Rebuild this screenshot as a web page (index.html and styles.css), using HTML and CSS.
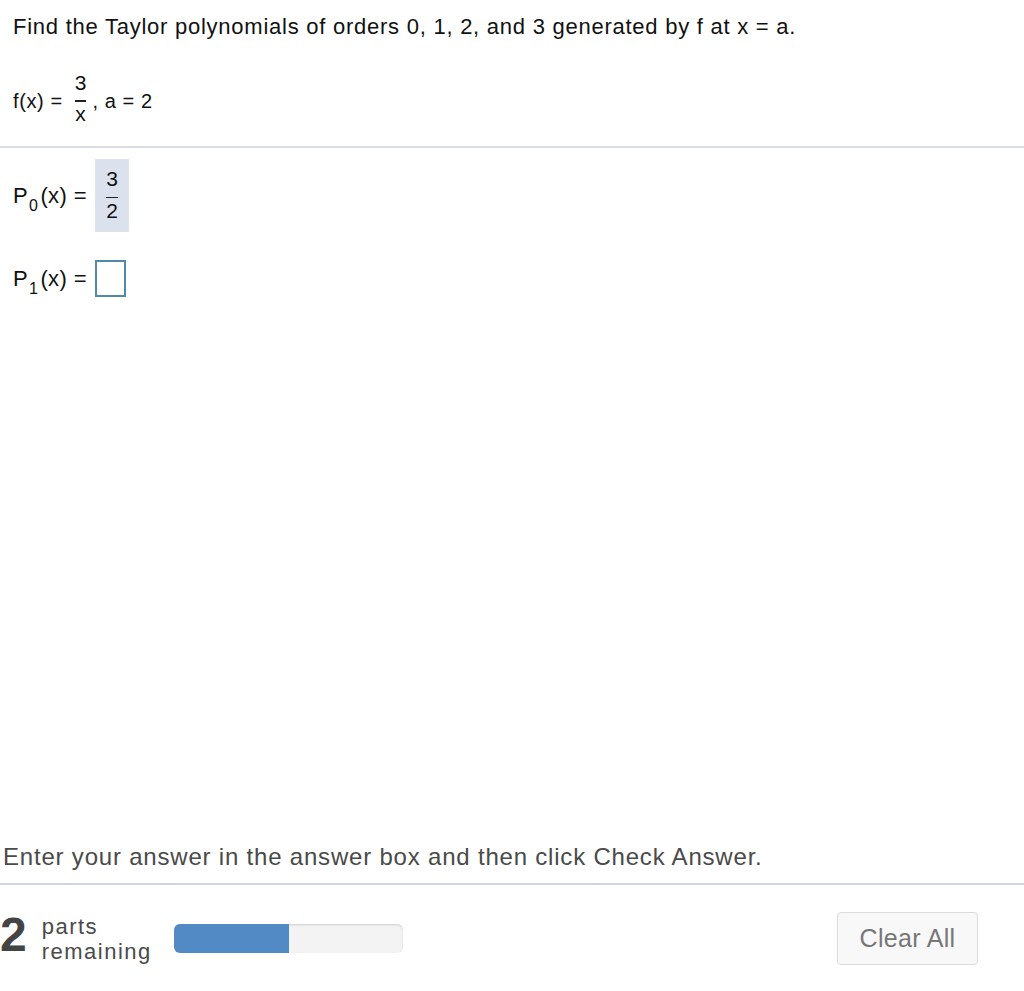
FILE: index.html
```html
<!DOCTYPE html>
<html lang="en">
<head>
<meta charset="utf-8">
<title>Taylor polynomials</title>
<link rel="stylesheet" href="styles.css">
</head>
<body>
<div class="page">
  <div class="question">
    <p class="title">Find the Taylor polynomials of orders 0, 1, 2, and 3 generated by f at x = a.</p>
    <div class="given">
      <span class="txt">f(x) =</span>
      <span class="frac">
        <span class="num">3</span>
        <span class="bar"></span>
        <span class="den">x</span>
      </span>
      <span class="txt">, a = 2</span>
    </div>
  </div>
  <div class="sep"></div>
  <div class="answers">
    <div class="row">
      <span class="txt">P<sub class="sub">0</sub>(x) =</span>
      <span class="filled">
        <span class="frac big">
          <span class="num">3</span>
          <span class="bar"></span>
          <span class="den">2</span>
        </span>
      </span>
    </div>
    <div class="row row2">
      <span class="txt">P<sub class="sub">1</sub>(x) =</span>
      <span class="inputbox"></span>
    </div>
  </div>
  <p class="instr">Enter your answer in the answer box and then click Check Answer.</p>
  <div class="sep sep2"></div>
  <div class="footer">
    <div class="remain">
      <span class="count">2</span>
      <span class="parts"><span class="pline">parts</span><span class="pline">remaining</span></span>
    </div>
    <div class="progress"><div class="fill" style="width: 50%"></div></div>
    <button class="clear">Clear All</button>
  </div>
</div>
</body>
</html>
```

FILE: styles.css
```css
* { box-sizing: border-box; }
html, body { margin: 0; padding: 0; background: #fff; }
body {
  font-family: "Liberation Sans", Arial, sans-serif;
  color: #111;
}
.page {
  height: 991px;
  display: flex;
  flex-direction: column;
}
.question { height: 146px; padding: 0 13px; flex: none; }
.title {
  margin: 0;
  padding-top: 14px;
  font-size: 22px;
  line-height: 26px;
  letter-spacing: 0.75px;
}
.given {
  margin-top: 33px;
  display: flex;
  align-items: center;
  font-size: 20px;
  line-height: 22px;
  letter-spacing: 0.6px;
}
.given .frac { margin-left: 10px; margin-right: 4px; font-size: 21px; }
.txt { white-space: pre; }

.frac {
  display: inline-flex;
  flex-direction: column;
  align-items: center;
  padding: 0 2px;
  letter-spacing: 0;
}
.frac .num { line-height: 20px; padding-bottom: 7px; }
.frac .den { line-height: 20px; padding-top: 2px; padding-bottom: 6px; }
.frac .bar { align-self: stretch; height: 1.5px; background: #222; }
.frac.big { font-size: 21px; padding: 0 1px; }
.frac.big .num, .frac.big .den { line-height: 22px; }

.sep { height: 2px; background: #d9dce4; flex: none; }

.answers { padding: 11px 13px 0; font-size: 22px; letter-spacing: 0.4px; }
.row { display: flex; align-items: center; line-height: 26px; }
.row .txt { margin-right: 8px; }
.sub { font-size: 16px; vertical-align: -8px; line-height: 0; margin: 0 2px 0 1px; }
.filled {
  width: 34px;
  height: 73px;
  padding-top: 5px;
  background: #dbe2ee;
  display: flex;
  align-items: center;
  justify-content: center;
}
.row2 { margin-top: 28px; }
.inputbox {
  width: 31px;
  height: 37px;
  border: 2px solid #4f8aab;
  background: #fff;
}

.instr {
  margin: auto 0 0;
  padding: 0 3px 12px;
  font-size: 24px;
  line-height: 28px;
  letter-spacing: 0.8px;
  color: #4a4a4a;
}
.sep2 { background: #d0d4de; }

.footer {
  height: 106px;
  display: flex;
  align-items: center;
  flex: none;
}
.remain { display: flex; align-items: center; width: 174px; }
.count {
  font-size: 48px;
  font-weight: bold;
  line-height: 48px;
  color: #444;
  margin-bottom: 6px;
}
.parts {
  margin-left: 15px;
  display: flex;
  flex-direction: column;
  font-size: 22px;
  letter-spacing: 1.5px;
  color: #4a4a4a;
  margin-top: 2px;
}
.pline { display: block; line-height: 25.5px; height: 25.5px; }
.progress {
  width: 229px;
  height: 29px;
  border-radius: 6px;
  background: #f3f3f3;
  box-shadow: inset 0 1px 2px rgba(0,0,0,0.15);
  overflow: hidden;
  display: flex;
}
.fill { height: 100%; background: #528ac5; }
.clear {
  margin-left: auto;
  margin-right: 46px;
  width: 141px;
  height: 53px;
  border: 1px solid #dcdcdc;
  border-radius: 4px;
  background: #f8f8f8;
  font-family: "Liberation Sans", Arial, sans-serif;
  font-size: 25px;
  letter-spacing: 0.3px;
  color: #777;
  padding: 0;
}
```
